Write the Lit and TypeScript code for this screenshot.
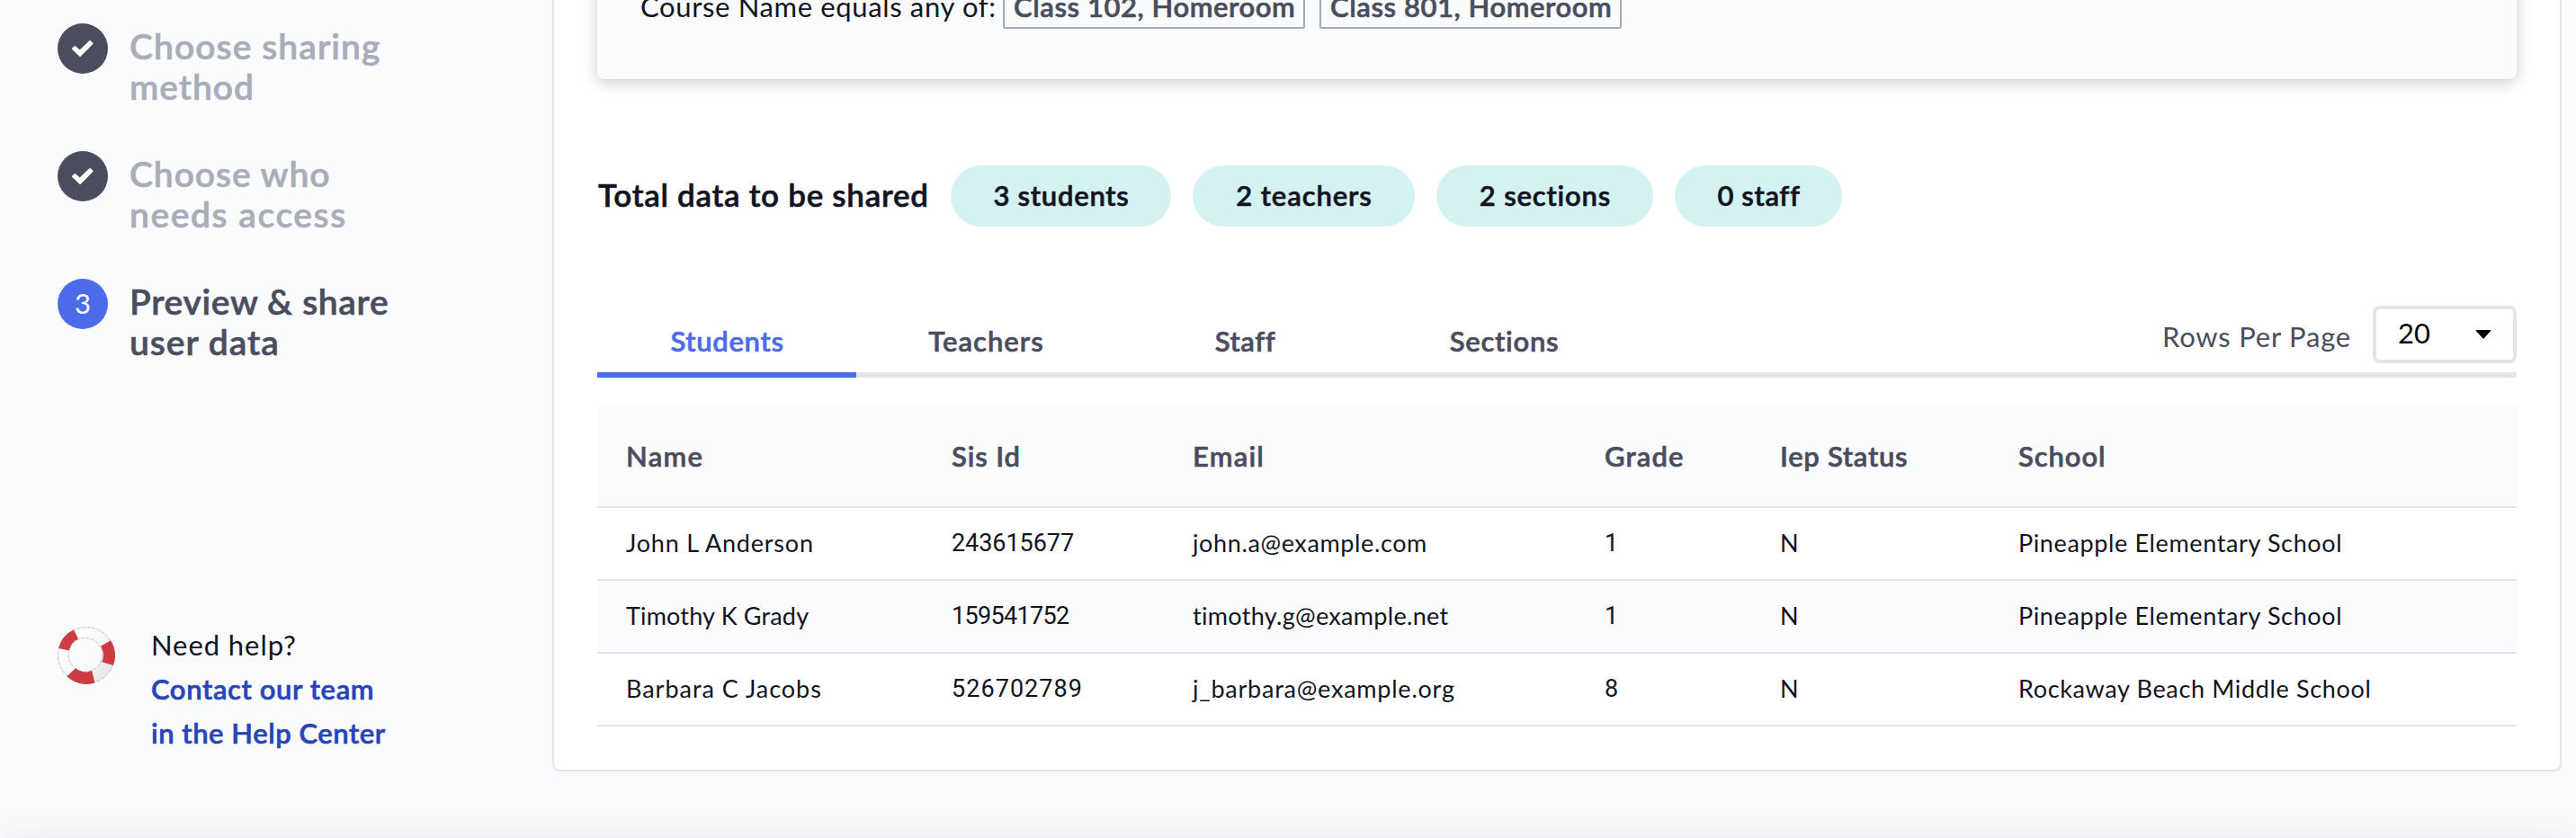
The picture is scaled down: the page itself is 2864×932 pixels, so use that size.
import { LitElement, html, css, svg } from "lit";
import { classMap } from "lit/directives/class-map.js";

/** A run of text with its own tracking, in pixels. */
type Run = [text: string, tracking: number];

const run = ([text, tracking]: Run) =>
  html`<span class="run" style="letter-spacing:${tracking}px">${text}</span>`;

const steps: { lines: Run[]; done: boolean }[] = [
  { done: true, lines: [["Choose sharing", 1.06], ["method", 0.93]] },
  { done: true, lines: [["Choose who", 0.93], ["needs access", 1.55]] },
  { done: false, lines: [["Preview & share", 0.66], ["user data", 0.96]] },
];

const tags: Run[] = [["Class 102, Homeroom", 0.57], ["Class 801, Homeroom", 0.57]];

const totals: { label: Run; width: number }[] = [
  { label: ["3 students", 0.73], width: 245 },
  { label: ["2 teachers", 0.88], width: 247 },
  { label: ["2 sections", 0.81], width: 241 },
  { label: ["0 staff", 0.6], width: 186 },
];

const tabs: Run[] = [["Students", 0.66], ["Teachers", 1.02], ["Staff", 0.54], ["Sections", 0.74]];

const columns: Run[] = [
  ["Name", 1.31], ["Sis Id", 0.86], ["Email", 1.21],
  ["Grade", 1.1], ["Iep Status", 0.69], ["School", 0.9],
];

const rows: Run[][] = [
  [["John L Anderson", 0.8], ["243615677", -0.05], ["john.a@example.com", 0.62], ["1", 0], ["N", 0], ["Pineapple Elementary School", 0.63]],
  [["Timothy K Grady", 0.18], ["159541752", -0.68], ["timothy.g@example.net", 0.31], ["1", 0], ["N", 0], ["Pineapple Elementary School", 0.63]],
  [["Barbara C Jacobs", 0.98], ["526702789", 1.05], ["j_barbara@example.org", 0.77], ["8", 0], ["N", 0], ["Rockaway Beach Middle School", 0.66]],
];

const check = svg`<svg class="check" viewBox="0 0 56 56"><path d="M17 28.3 L19.2 26 L24.8 30.8 L36 20 L38.6 22.4 L25 36 Z"/></svg>`;

const lifebuoy = svg`<svg class="buoy" viewBox="0 0 64 64">
  <defs>
    <linearGradient id="ring" x1="0" y1="0" x2="1" y2="1">
      <stop offset="0.3" stop-color="#fdfdfd"/><stop offset="1" stop-color="#e2e2e3"/>
    </linearGradient>
  </defs>
  <path fill="url(#ring)" fill-rule="evenodd" d="M32 .5a31.5 31.5 0 1 1 0 63a31.5 31.5 0 1 1 0-63Z M30.9 12.5a18.7 18.7 0 1 0 0 37.4a18.7 18.7 0 1 0 0-37.4Z"/>
  <circle class="rim" cx="32" cy="32" r="31.4"/>
  <circle class="rim" cx="30.9" cy="31.2" r="18.7"/>
  <path class="band" d="M1 24A31.8 31.8 0 0 1 18 3.3L23 13.4A18.6 18.6 0 0 0 12.8 26.4Z"/>
  <path class="band" d="M59 15.3A31.8 31.8 0 0 1 62 43L49.3 39.3A18.8 18.8 0 0 0 48 21.7Z"/>
  <path class="band" d="M41.3 62.6A31.8 31.8 0 0 1 10.3 55.3L20 46.3A18.8 18.8 0 0 0 38.3 49Z"/>
</svg>`;

class AppRoot extends LitElement {
  static styles = css`
    :host {
      display: block;
      width: 2864px;
      height: 932px;
      overflow: hidden;
      background: #fafbfd;
      color: #14141f;
      font: 400 31px/49px Lato, "Open Sans", sans-serif;
    }
    * { box-sizing: border-box; }
    .run { white-space: nowrap; }
    .title, .link, .tag, .totals-label, .pill, .tab, .row.head {
      font-weight: 600;
      -webkit-text-stroke: 0.6px currentColor;
    }
    .page { display: flex; height: 932px; }

    .side {
      width: 614px;
      height: 858px;
      padding: 26px 64px 18px;
      display: flex;
      flex-direction: column;
      justify-content: space-between;
    }
    .steps { display: flex; flex-direction: column; gap: 50px; }
    .step { display: flex; gap: 24px; height: 92px; }
    .badge {
      flex: none;
      width: 56px;
      height: 56px;
      border-radius: 50%;
      background: #4c6be9;
      color: #fff;
      display: grid;
      place-items: center;
      padding-bottom: 2px;
    }
    .done .badge { background: #4a4d5e; padding: 0; }
    .check { width: 56px; height: 56px; }
    .check path { fill: #fff; stroke: #fff; stroke-width: 2; stroke-linejoin: round; }
    .title {
      display: flex;
      flex-direction: column;
      padding-top: 3px;
      font-size: 39px;
      line-height: 45px;
      color: #4a4d5e;
    }
    .done .title { color: #a9adb9; }

    .help { display: flex; gap: 40px; }
    .buoy { width: 64px; height: 64px; margin-top: 4px; flex: none; }
    .rim { fill: none; stroke: #b4b4b6; stroke-width: 0.8; stroke-dasharray: 4 1.5; }
    .band { fill: #cc3d41; }
    .help-text { display: flex; flex-direction: column; }
    .link { color: #2845b8; text-decoration: none; }

    .panel {
      width: 2234px;
      height: 858px;
      padding: 0 48px;
      background: #fff;
      border: 2px solid #e4e5ea;
      border-top: 0;
      border-radius: 0 0 8px 8px;
    }
    .filter {
      display: flex;
      align-items: flex-end;
      height: 128px;
      margin-top: -40px;
      padding: 0 48px 56px;
      border-radius: 8px;
      background: #fafbfd;
      box-shadow: 0 4px 16px rgba(20, 20, 31, 0.21);
      line-height: 50px;
    }
    .filter-label { width: 403px; }
    .tag {
      width: 336px;
      height: 50px;
      margin-right: 16px;
      padding-left: 10px;
      border: 2px solid #a5aab8;
      border-radius: 2px;
      line-height: 46px;
      color: #4a4d5e;
    }

    .totals { display: flex; gap: 24px; margin-top: 96px; height: 68px; line-height: 65px; }
    .totals-label { width: 369px; padding-left: 1px; font-size: 35px; }
    .pill {
      padding-left: 1px;
      border-radius: 34px;
      background: #d4f2f2;
      text-align: center;
      line-height: 66px;
    }

    .tabs { display: flex; height: 80px; margin-top: 88px; }
    .tab {
      width: 288px;
      padding: 15px 0 0 1px;
      border-bottom: 6px solid #e4e5ea;
      text-align: center;
      color: #4a4d5e;
    }
    .tab.active { color: #4c6be9; border-color: #4c6be9; }
    .pager {
      flex: 1;
      display: flex;
      justify-content: flex-end;
      gap: 24px;
      border-bottom: 6px solid #e4e5ea;
      color: #4a4d5e;
      line-height: 68px;
    }
    .select {
      display: flex;
      align-items: center;
      justify-content: space-between;
      width: 160px;
      height: 64px;
      padding: 0 24px;
      border: 4px solid #e4e5ea;
      border-radius: 8px;
      background: #fff;
      color: #000;
      line-height: 52px;
    }
    .value { padding-bottom: 4px; }
    .caret { width: 18px; height: 10px; }

    .table { margin-top: 32px; }
    .row {
      display: grid;
      grid-template-columns: 362px 268px 458px 195px 265px 1fr;
      height: 81px;
      padding-left: 32px;
      border-bottom: 2px solid #e4e5ea;
      font-size: 27px;
      line-height: 77px;
    }
    .row.striped { background: #fafbfd; }
    .row.head {
      height: 113px;
      background: #fafbfd;
      font-size: 31px;
      line-height: 111px;
      color: #4a4d5e;
    }
    .numeric { font-family: Roboto, sans-serif; line-height: 79px; }

    .footer { height: 80px; box-shadow: 0 0 40px rgba(20, 20, 31, 0.085); }
  `;

  render() {
    return html`
      <div class="page">
        <aside class="side">
          <div class="steps">
            ${steps.map((s, i) => html`
              <div class=${classMap({ step: true, done: s.done })}>
                <div class="badge">${s.done ? check : i + 1}</div>
                <div class="title">${s.lines.map(run)}</div>
              </div>`)}
          </div>
          <div class="help">
            ${lifebuoy}
            <div class="help-text">
              ${run(["Need help?", 0.93])}
              <a class="link">${run(["Contact our team", 0.6])}<br />${run(["in the Help Center", 0.52])}</a>
            </div>
          </div>
        </aside>
        <main class="panel">
          <div class="filter">
            <div class="filter-label">${run(["Course Name equals any of:", 0.64])}</div>
            ${tags.map((t) => html`<div class="tag">${run(t)}</div>`)}
          </div>
          <div class="totals">
            <div class="totals-label">${run(["Total data to be shared", 0.7])}</div>
            ${totals.map((t) => html`<div class="pill" style="width:${t.width}px">${run(t.label)}</div>`)}
          </div>
          <nav class="tabs">
            ${tabs.map((t, i) => html`<div class=${classMap({ tab: true, active: i === 0 })}>${run(t)}</div>`)}
            <div class="pager">
              ${run(["Rows Per Page", 0.78])}
              <div class="select">
                <span class="value">20</span>
                <svg class="caret" viewBox="0 0 18 10"><path d="M1 .5h16L9 9.5Z" stroke="#000" stroke-linejoin="round" /></svg>
              </div>
            </div>
          </nav>
          <section class="table">
            <div class="row head">${columns.map((c) => html`<div>${run(c)}</div>`)}</div>
            ${rows.map((r, i) => html`
              <div class=${classMap({ row: true, striped: i % 2 === 1 })}>
                ${r.map((c, j) => html`<div class=${classMap({ numeric: j === 1 || j === 3 })}>${run(c)}</div>`)}
              </div>`)}
          </section>
        </main>
      </div>
      <div class="footer"></div>
    `;
  }
}

customElements.define("app-root", AppRoot);
